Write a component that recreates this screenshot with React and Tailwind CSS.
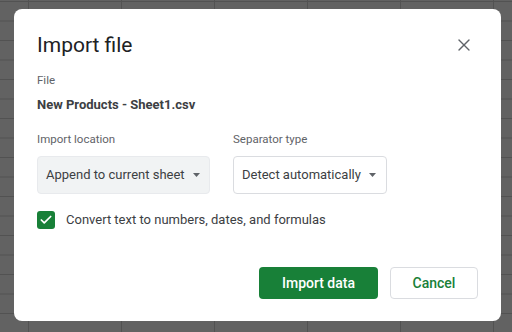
import { X, Check } from "lucide-react";

const Caret = () => (
  <svg width="7" height="4" viewBox="0 0 7 4" className="shrink-0">
    <path d="M0 0 L7 0 L3.5 4 Z" fill="#5f6368" />
  </svg>
);

const Select = ({ label, value, filled, width }) => (
  <div className="flex flex-col">
    <div className="text-[11.5px] leading-4 text-[#5f6368]">{label}</div>
    <div
      className={`mt-[9px] h-[38px] ${width} flex items-center gap-2 pl-2 rounded border ${
        filled ? "bg-[#f1f3f4] border-[#e8eaed]" : "bg-white border-[#dadce0]"
      }`}
    >
      <span className="text-[13px] whitespace-nowrap text-[#3c4043]">{value}</span>
      <Caret />
    </div>
  </div>
);

export default function App() {
  return (
    <div className="w-[512px] h-[332px] overflow-hidden pt-[9px] pl-[14px] bg-[#626262] bg-[linear-gradient(to_right,#525252_1px,transparent_1px),linear-gradient(to_bottom,#525252_1px,transparent_1px)] bg-[size:93px_19.5px] bg-[position:28px_1px] font-['Roboto',sans-serif]">
      <div className="w-[487px] h-[312px] bg-white rounded-lg flex flex-col pl-[23px] pr-[23px] pt-[22px]">
        <div className="flex items-center justify-between">
          <h1 className="text-[21px] leading-7 text-[#202124]">Import file</h1>
          <X size={20} strokeWidth={1.6} color="#5f6368" className="mr-[4px]" />
        </div>

        <div className="mt-[13px] text-[11.5px] leading-4 text-[#5f6368]">File</div>
        <div className="mt-[7px] text-[13px] leading-5 font-bold text-[#3c4043]">
          New Products - Sheet1.csv
        </div>

        <div className="mt-4 flex gap-[23px]">
          <Select label="Import location" value="Append to current sheet" filled width="w-[173px]" />
          <Select label="Separator type" value="Detect automatically" width="w-[154px]" />
        </div>

        <label className="mt-4 flex items-center gap-[11px]">
          <span className="w-[18px] h-[18px] rounded-[3px] bg-[#188038] flex items-center justify-center">
            <Check size={14} strokeWidth={3} color="white" />
          </span>
          <span className="text-[13px] text-[#3c4043]">
            Convert text to numbers, dates, and formulas
          </span>
        </label>

        <div className="mt-auto mb-[22px] flex justify-end gap-3">
          <button className="w-[119px] h-8 rounded bg-[#188038] text-white text-[14px] font-medium">
            Import data
          </button>
          <button className="w-[88px] h-8 rounded border border-[#dadce0] bg-white text-[#188038] text-[14px] font-medium">
            Cancel
          </button>
        </div>
      </div>
    </div>
  );
}
